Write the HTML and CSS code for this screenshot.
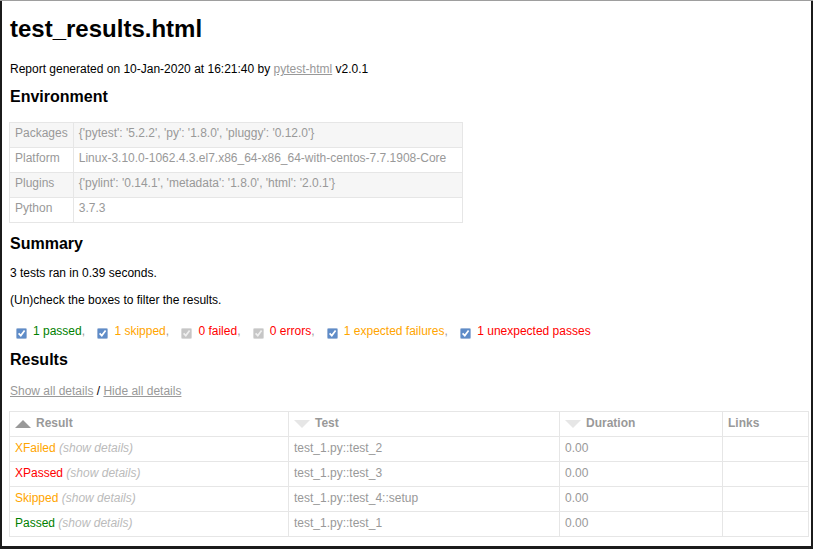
FILE: index.html
```html
<!DOCTYPE html>
<html>
<head>
<meta charset="utf-8">
<title>Test Report</title>
<link rel="stylesheet" href="styles.css">
</head>
<body>
<div class="topbar"></div>
<div class="window">
  <h1>test_results.html</h1>
  <p class="generated">Report generated on 10-Jan-2020 at 16:21:40 by <a href="#">pytest-html</a> v2.0.1</p>
  <h2>Environment</h2>
  <table class="env">
    <tr><td class="key">Packages</td><td class="val">{'pytest': '5.2.2', 'py': '1.8.0', 'pluggy': '0.12.0'}</td></tr>
    <tr><td class="key">Platform</td><td class="val">Linux-3.10.0-1062.4.3.el7.x86_64-x86_64-with-centos-7.7.1908-Core</td></tr>
    <tr><td class="key">Plugins</td><td class="val">{'pylint': '0.14.1', 'metadata': '1.8.0', 'html': '2.0.1'}</td></tr>
    <tr><td class="key">Python</td><td class="val">3.7.3</td></tr>
  </table>
  <h2>Summary</h2>
  <p>3 tests ran in 0.39 seconds. </p>
  <p>(Un)check the boxes to filter the results.</p>
  <div class="filters"><span class="cb"><svg width="13" height="13" viewBox="0 0 13 13"><rect class="box" x="2.5" y="2.5" width="10" height="10" rx="1"/><path class="tick" d="M4.6 7.4 L6.8 9.6 L10.6 4.6"/></svg></span><span class="passed">1 passed</span><span class="sep">, </span><span class="cb"><svg width="13" height="13" viewBox="0 0 13 13"><rect class="box" x="2.5" y="2.5" width="10" height="10" rx="1"/><path class="tick" d="M4.6 7.4 L6.8 9.6 L10.6 4.6"/></svg></span><span class="skipped">1 skipped</span><span class="sep">, </span><span class="cb off"><svg width="13" height="13" viewBox="0 0 13 13"><rect class="box" x="2.5" y="2.5" width="10" height="10" rx="1"/><path class="tick" d="M4.6 7.4 L6.8 9.6 L10.6 4.6"/></svg></span><span class="failed">0 failed</span><span class="sep">, </span><span class="cb off"><svg width="13" height="13" viewBox="0 0 13 13"><rect class="box" x="2.5" y="2.5" width="10" height="10" rx="1"/><path class="tick" d="M4.6 7.4 L6.8 9.6 L10.6 4.6"/></svg></span><span class="failed">0 errors</span><span class="sep">, </span><span class="cb"><svg width="13" height="13" viewBox="0 0 13 13"><rect class="box" x="2.5" y="2.5" width="10" height="10" rx="1"/><path class="tick" d="M4.6 7.4 L6.8 9.6 L10.6 4.6"/></svg></span><span class="skipped">1 expected failures</span><span class="sep">, </span><span class="cb"><svg width="13" height="13" viewBox="0 0 13 13"><rect class="box" x="2.5" y="2.5" width="10" height="10" rx="1"/><path class="tick" d="M4.6 7.4 L6.8 9.6 L10.6 4.6"/></svg></span><span class="failed">1 unexpected passes</span></div>
  <h2 class="results-title">Results</h2>
  <p class="details"><a href="#">Show all details</a> / <a href="#">Hide all details</a></p>
  <table class="results">
    <colgroup>
      <col class="c-result">
      <col class="c-test">
      <col class="c-duration">
      <col class="c-links">
    </colgroup>
    <thead>
      <tr>
        <th><span class="sort-icon asc"></span>Result</th>
        <th><span class="sort-icon desc"></span>Test</th>
        <th><span class="sort-icon desc"></span>Duration</th>
        <th>Links</th>
      </tr>
    </thead>
    <tbody>
      <tr class="row-xfailed"><td class="col-result">XFailed<span class="expander"> (show details)</span></td><td>test_1.py::test_2</td><td>0.00</td><td></td></tr>
      <tr class="row-xpassed"><td class="col-result">XPassed<span class="expander"> (show details)</span></td><td>test_1.py::test_3</td><td>0.00</td><td></td></tr>
      <tr class="row-skipped"><td class="col-result">Skipped<span class="expander"> (show details)</span></td><td>test_1.py::test_4::setup</td><td>0.00</td><td></td></tr>
      <tr class="row-passed"><td class="col-result">Passed<span class="expander"> (show details)</span></td><td>test_1.py::test_1</td><td>0.00</td><td></td></tr>
    </tbody>
  </table>
</div>
</body>
</html>
```
FILE: styles.css
```css
html, body {
  margin: 0;
  padding: 0;
}
body {
  background: #1b1b1b;
  font-family: "Liberation Sans", Arial, Helvetica, sans-serif;
  font-size: 12px;
  color: #999;
  overflow: hidden;
}
.topbar {
  height: 1px;
  background: #9e9e9e;
}
.window {
  display: flow-root;
  margin: 0 2px;
  height: 545px;
  padding-left: 8px;
  background: #fff;
  overflow: hidden;
}
h1 {
  margin: 14px 0 0;
  font-size: 24px;
  line-height: 28px;
  color: #000;
}
h2 {
  margin: 11px 0 0;
  font-size: 16px;
  line-height: 19px;
  color: #000;
}
p {
  margin: 13px 0 0;
  line-height: 14px;
  color: #000;
}
p.generated {
  margin-top: 19px;
}
a {
  color: #999;
}
.env {
  margin: 16px 0 0 -1px;
  border-collapse: collapse;
}
.env td {
  border: 1px solid #e6e6e6;
  padding: 3px 5px 7px;
  line-height: 14px;
  white-space: nowrap;
}
.env td.val {
  width: 378px;
}
.env tr:nth-child(odd) {
  background: #f6f6f6;
}
.filters {
  margin-top: 14px;
  height: 20px;
  line-height: 20px;
  white-space: nowrap;
}
.cb {
  display: inline-block;
  width: 13px;
  height: 13px;
  margin: 0 6px 0 4px;
  vertical-align: -4px;
}
.cb svg {
  display: block;
}
.cb .box {
  fill: #5f8cc8;
  stroke: #9db6d9;
  stroke-width: 1;
}
.cb .tick {
  fill: none;
  stroke: #fff;
  stroke-width: 1.7;
}
.cb.off .box {
  fill: #c6c6c6;
  stroke: #dadada;
}
.cb.off .tick {
  stroke: #efefef;
}
.sep {
  color: #999;
  margin-right: 3px;
}
.passed {
  color: green;
}
.skipped {
  color: orange;
}
.failed {
  color: red;
}
.results-title {
  margin-top: 9px;
}
.details {
  margin-top: 15px;
}
.results {
  margin: 13px 0 0 -1px;
  border-collapse: collapse;
  table-layout: fixed;
  width: 799px;
  color: #999;
}
.c-result { width: 279px; }
.c-test { width: 271px; }
.c-duration { width: 163px; }
.c-links { width: 86px; }
.results th,
.results td {
  border: 1px solid #e6e6e6;
  padding: 4px 5px 6px;
  line-height: 14px;
  text-align: left;
  white-space: nowrap;
}
.results th {
  font-weight: bold;
}
.sort-icon {
  float: left;
  width: 0;
  height: 0;
  margin: 4px 5px 0 0;
  border-left: 8px solid transparent;
  border-right: 8px solid transparent;
}
.sort-icon.asc {
  border-bottom: 8px solid #999;
}
.sort-icon.desc {
  border-top: 8px solid #e6e6e6;
}
.row-xfailed .col-result,
.row-skipped .col-result {
  color: orange;
}
.row-xpassed .col-result {
  color: red;
}
.row-passed .col-result {
  color: green;
}
.expander {
  color: #bbb;
  font-style: italic;
}
```
